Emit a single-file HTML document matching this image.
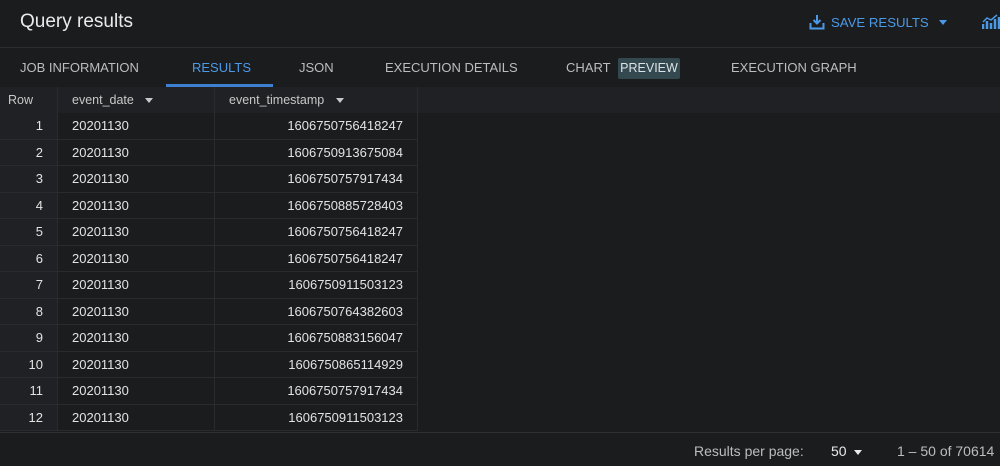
<!DOCTYPE html>
<html><head><style>
*{margin:0;padding:0;box-sizing:border-box}
body{width:1000px;height:466px;background:#1b1c1e;font-family:"Liberation Sans",sans-serif;color:#e3e3e3;position:relative;overflow:hidden}
.title{position:absolute;left:20px;top:11px;font-size:19px;color:#e8eaed}
.save{position:absolute;left:809px;top:14px;color:#4b9ae8;font-size:13.2px;display:flex;align-items:center}
.tabs{position:absolute;top:47px;left:0;width:1000px;height:40px;border-top:1px solid #2c2d30}
.tab{position:absolute;top:12px;font-size:13px;color:#bdbdbd}
.hdr{position:absolute;top:87px;left:0;width:1000px;height:26px;background:#202124}
.row{position:absolute;left:0;width:418px;height:26.5px;border-bottom:1px solid #2a2b2e;font-size:13px}
.row div,.hdr div{position:absolute;top:0;height:100%;line-height:26px}
.c0{left:0;width:58px;background:#202124;text-align:right;padding-right:14px;border-right:1px solid #2a2b2e}
.c1{left:58px;width:157px;padding-left:14px;border-right:1px solid #2a2b2e}
.c2{left:215px;width:203px;text-align:right;padding-right:14px;border-right:1px solid #2a2b2e}
.hdr div{font-size:12.5px;color:#c8c8c8}
.foot{position:absolute;top:432px;left:0;width:1000px;height:34px;border-top:1px solid #2e2f32;font-size:14px;color:#bdbdbd}
.tri{display:inline-block;width:0;height:0;border-left:4px solid transparent;border-right:4px solid transparent;border-top:5px solid currentColor;vertical-align:middle}
</style></head><body>
<div class="title">Query results</div>
<div class="save"><svg width="16" height="16" viewBox="0 0 16 16"><path d="M8 1v8M4.5 6 8 9.5 11.5 6" stroke="#4b9ae8" stroke-width="2" fill="none"/><path d="M1.5 9v5.5h13V9" stroke="#4b9ae8" stroke-width="2" fill="none"/></svg><span style="margin-left:6px">SAVE RESULTS</span><span class="tri" style="margin-left:10px;color:#4b9ae8"></span></div>
<svg style="position:absolute;left:982px;top:14px" width="18" height="16" viewBox="0 0 18 16"><path d="M1 15V10M5 15V7M9 15V9M13 15V5M17 15V3" stroke="#4b9ae8" stroke-width="2.5"/><path d="M1 8 5 4 9 6 15 1" stroke="#4b9ae8" stroke-width="1.5" fill="none"/></svg>
<div class="tabs">
<div class="tab" style="left:20px">JOB INFORMATION</div>
<div class="tab" style="left:192px;color:#4b9ae8">RESULTS</div>
<div style="position:absolute;left:166px;top:36px;width:107px;height:3px;background:#3d7fd0"></div>
<div class="tab" style="left:299px">JSON</div>
<div class="tab" style="left:385px">EXECUTION DETAILS</div>
<div class="tab" style="left:566px">CHART</div>
<div style="position:absolute;left:618px;top:10px;width:62px;height:21px;background:#34484f;border-radius:2px;color:#dce3e6;font-size:12.5px;line-height:21px;text-align:center">PREVIEW</div>
<div class="tab" style="left:731px">EXECUTION GRAPH</div>
</div>
<div class="hdr">
<div class="c0" style="text-align:left;padding-left:8px">Row</div>
<div class="c1">event_date <span class="tri" style="margin-left:8px"></span></div>
<div class="c2" style="text-align:left;padding-left:14px">event_timestamp <span class="tri" style="margin-left:8px"></span></div>
</div>
<div id="rows"></div>
<div class="foot">
<span style="position:absolute;left:694px;top:10px">Results per page:</span>
<span style="position:absolute;left:831px;top:10px;color:#e8eaed">50 <span class="tri" style="margin-left:4px"></span></span>
<span style="position:absolute;left:897px;top:10px">1 – 50 of 70614</span>
</div>
<script>
var ts=["1606750756418247","1606750913675084","1606750757917434","1606750885728403","1606750756418247","1606750756418247","1606750911503123","1606750764382603","1606750883156047","1606750865114929","1606750757917434","1606750911503123"];
var h="";for(var i=0;i<12;i++){h+='<div class="row" style="top:'+(113+i*26.5)+'px"><div class="c0">'+(i+1)+'</div><div class="c1">20201130</div><div class="c2">'+ts[i]+'</div></div>';}
document.getElementById("rows").innerHTML=h;
</script>
</body></html>
